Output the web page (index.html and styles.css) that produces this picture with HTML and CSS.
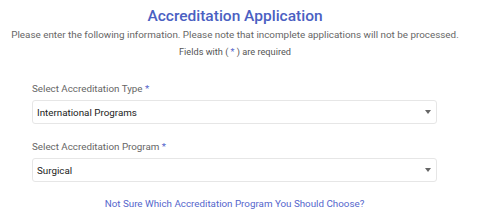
FILE: index.html
```html
<!DOCTYPE html>
<html lang="en">
<head>
  <meta charset="UTF-8" />
  <meta name="viewport" content="width=device-width, initial-scale=1" />
  <title>Accreditation Application</title>
  <link rel="stylesheet" href="styles.css">
</head>
<body>
  <div class="container">
    <h1>Accreditation Application</h1>
    <p class="intro">Please enter the following information. Please note that incomplete applications will not be processed.</p>
    <p class="required-note">Fields with ( <span class="star">*</span> ) are required</p>

    <form class="app-form">
      <div class="field">
        <label for="accType">Select Accreditation Type <span class="star">*</span></label>
        <div class="select-wrap">
          <select id="accType">
            <option>International Programs</option>
          </select>
          <span class="caret"></span>
        </div>
      </div>

      <div class="field">
        <label for="accProgram">Select Accreditation Program <span class="star">*</span></label>
        <div class="select-wrap">
          <select id="accProgram">
            <option>Surgical</option>
          </select>
          <span class="caret"></span>
        </div>
      </div>

      <a class="help-link" href="#">Not Sure Which Accreditation Program You Should Choose?</a>
    </form>
  </div>
</body>
</html>
```

FILE: styles.css
```css
body {
  font-family: Roboto, 'Noto Sans', sans-serif;
  background: #fff;
  margin: 0;
  padding: 0;
}

.container {
  width: 470px;
  padding-top: 5px;
}

h1 {
  margin: 0;
  text-align: center;
  font-size: 15.5px;
  font-weight: 500;
  line-height: 22px;
  color: #4b5fc2;
}

.intro {
  margin: 1px 0 0;
  text-align: center;
  white-space: nowrap;
  font-size: 9.85px;
  line-height: 14px;
  color: #666;
}

.required-note {
  margin: 3px 0 0;
  text-align: center;
  font-size: 9.2px;
  line-height: 14px;
  color: #555;
}

.star {
  color: #5566cc;
}

.app-form {
  margin: 23px 33px 0 32px;
  display: flex;
  flex-direction: column;
}

.field {
  display: flex;
  flex-direction: column;
  margin-bottom: 16px;
}

.field label {
  font-size: 9.8px;
  line-height: 14px;
  color: #666;
  margin-bottom: 4px;
}

.select-wrap {
  position: relative;
}

select {
  width: 100%;
  height: 24px;
  padding: 0 4px;
  border: 1px solid #e6e6e6;
  border-radius: 3px;
  background: #fff;
  font-family: inherit;
  font-size: 9.8px;
  color: #222;
  appearance: none;
  -webkit-appearance: none;
}

.caret {
  position: absolute;
  right: 6px;
  top: 10px;
  border-left: 3.5px solid transparent;
  border-right: 3.5px solid transparent;
  border-top: 4px solid #666;
}

.help-link {
  align-self: center;
  margin-top: -1px;
  font-size: 9.8px;
  line-height: 14px;
  color: #5566cc;
  text-decoration: none;
}
```
